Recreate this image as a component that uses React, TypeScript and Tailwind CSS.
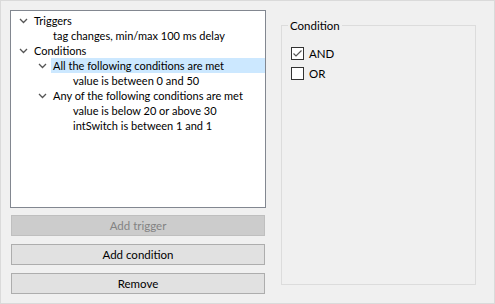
import React from 'react';

const Chevron = () => (
    <svg width="9" height="6" viewBox="0 0 9 6" className="shrink-0">
        <path d="M1 1 L4.5 4.5 L8 1" fill="none" stroke="#555" strokeWidth="1.3" />
    </svg>
);

interface RowProps {
    level: number;
    expandable?: boolean;
    selected?: boolean;
    text: string;
}

const Row: React.FC<RowProps> = ({ level, expandable, selected, text }) => {
    const indent = [0, 19, 39][level];
    return (
        <div className="flex h-[15px] items-center whitespace-nowrap" style={{ paddingLeft: indent }}>
            <div className="flex w-[20px] justify-center pl-[3px]">{expandable && <Chevron />}</div>
            <div className={selected ? 'flex h-full flex-1 items-center bg-[#cce8ff] pl-[2px]' : 'flex h-full items-center pl-[2px]'}>
                {text}
            </div>
        </div>
    );
};

const Button: React.FC<{ label: string; disabled?: boolean }> = ({ label, disabled }) => (
    <button
        className={
            disabled
                ? 'mx-[1px] h-[21px] border border-[#bfbfbf] bg-[#cccccc] text-[#838383]'
                : 'mx-[1px] h-[21px] border border-[#adadad] bg-[#e1e1e1] text-black'
        }
    >
        {label}
    </button>
);

const Check: React.FC<{ label: string; checked?: boolean }> = ({ label, checked }) => (
    <div className="flex h-[13px] items-center gap-[5px]">
        <div className="flex h-[13px] w-[13px] items-center justify-center border border-[#333] bg-white">
            {checked && (
                <svg width="11" height="11" viewBox="0 0 11 11">
                    <path d="M1.5 5.5 L4 8 L9.5 2.5" fill="none" stroke="#555" strokeWidth="1.2" />
                </svg>
            )}
        </div>
        <span>{label}</span>
    </div>
);

export default function App() {
    return (
        <div
            className="flex h-[304px] w-[495px] gap-[15px] border border-[#dadada] bg-[#f0f0f0] p-[9px] text-[11.5px] leading-[15px] text-black"
            style={{ fontFamily: '"Segoe UI", Lato, "Noto Sans", sans-serif' }}
        >
            <div className="flex w-[256px] flex-col">
                <div className="h-[198px] border border-[#828790] bg-white pt-[2px] pl-[1px] text-[11px]">
                    <Row level={0} expandable text="Triggers" />
                    <Row level={1} text="tag changes, min/max 100 ms delay" />
                    <Row level={0} expandable text="Conditions" />
                    <Row level={1} expandable selected text="All the following conditions are met" />
                    <Row level={2} text="value is between 0 and 50" />
                    <Row level={1} expandable text="Any of the following conditions are met" />
                    <Row level={2} text="value is below 20 or above 30" />
                    <Row level={2} text="intSwitch is between 1 and 1" />
                </div>
                <div className="mt-[7px] flex flex-col gap-[8px]">
                    <Button label="Add trigger" disabled />
                    <Button label="Add condition" />
                    <Button label="Remove" />
                </div>
            </div>
            <fieldset className="mt-[8px] h-[267px] w-[195px] border border-[#dcdcdc] px-[9px] pt-[14px]">
                <legend className="ml-[-3px] px-[2px]">Condition</legend>
                <div className="flex flex-col gap-[7px]">
                    <Check label="AND" checked />
                    <Check label="OR" />
                </div>
            </fieldset>
        </div>
    );
}
